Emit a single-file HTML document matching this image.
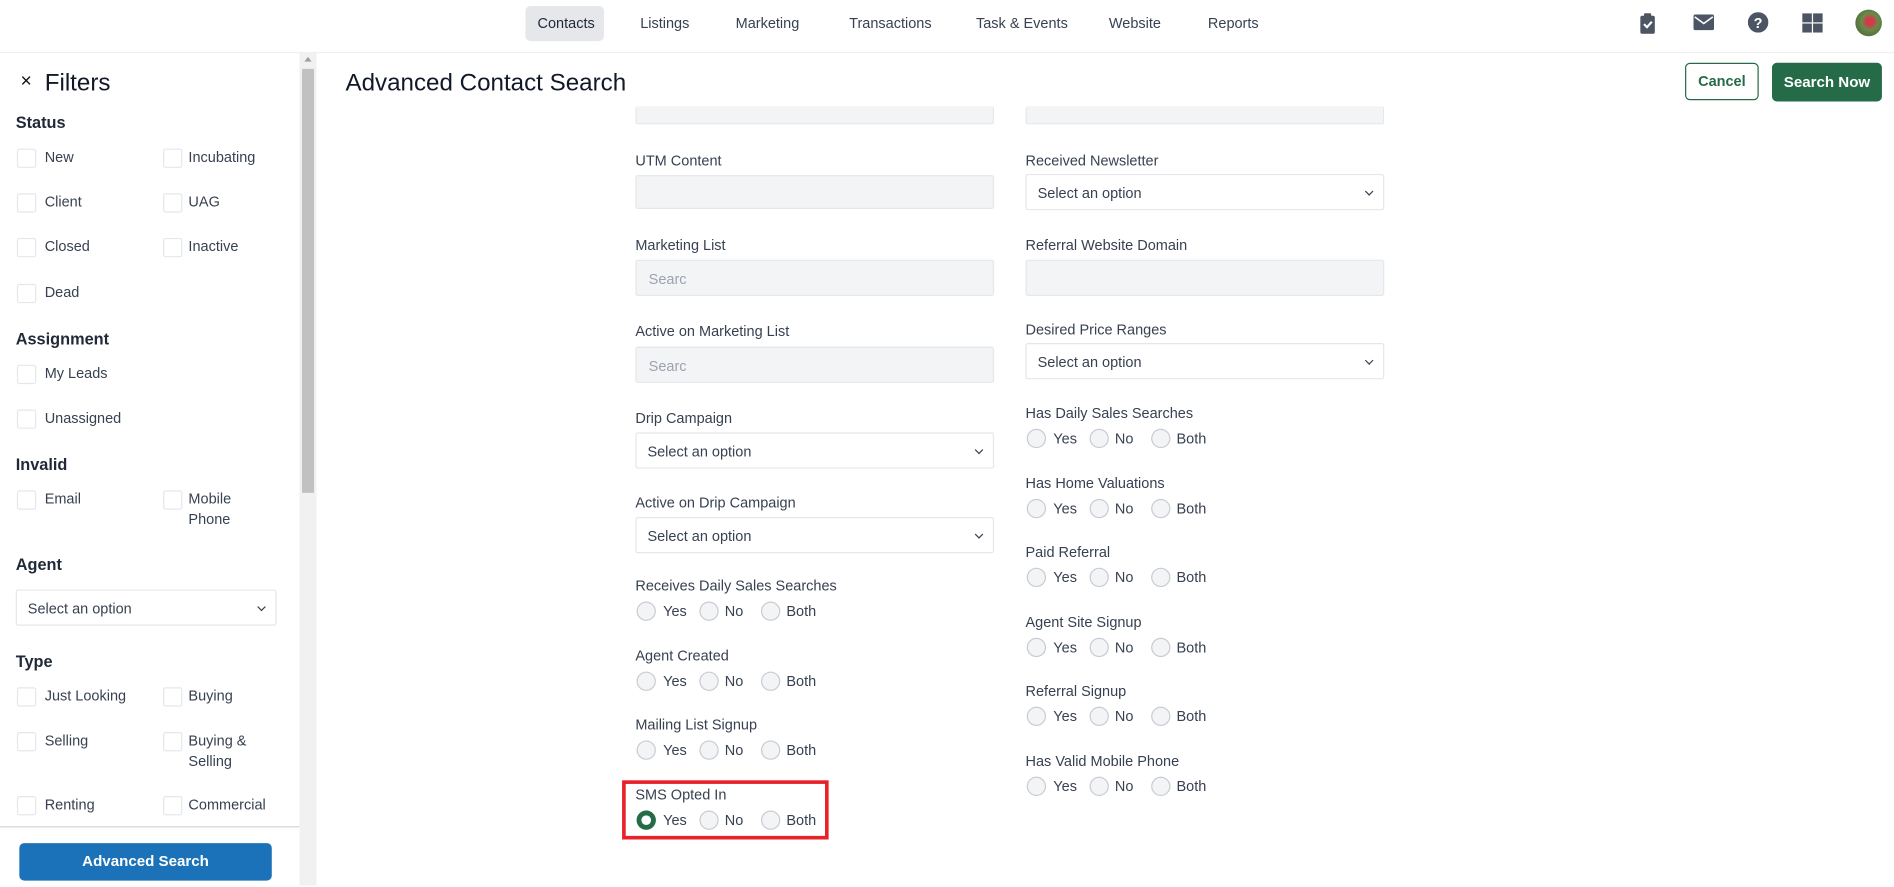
<!DOCTYPE html>
<html><head><meta charset="utf-8"><style>
html,body{margin:0;padding:0;width:1894px;height:885px;overflow:hidden;background:#fff}
#s{position:absolute;left:0;top:0;width:1568px;height:733px;transform:scale(1.20791);transform-origin:0 0;font-family:"Liberation Sans",sans-serif;color:#374151}
.a{position:absolute;white-space:nowrap}
.nav{font-size:12px;color:#374151;top:12px}
.h{font-size:13.5px;font-weight:bold;color:#1f2937}
.cb{position:absolute;width:14px;height:14px;border:1px solid #e5e7eb;border-radius:2px;background:#fff}
.cl{position:absolute;font-size:12px;color:#374151;line-height:17px}
.lab{position:absolute;font-size:12px;color:#374151;font-weight:500}
.inp{position:absolute;width:297px;height:28px;background:#f3f4f6;border:1px solid #e5e7eb;border-radius:2px;box-sizing:border-box}
.sel{position:absolute;width:297px;height:30px;background:#fff;border:1px solid #e5e7eb;border-radius:2px;box-sizing:border-box;font-size:12px;color:#374151;padding:8px 9px}
.sel:after{content:"";position:absolute;right:9px;top:11px;width:4px;height:4px;border-right:1.3px solid #374151;border-bottom:1.3px solid #374151;transform:rotate(45deg)}
.rd{position:absolute;width:16px;height:16px;border:1px solid #c8ccd2;border-radius:50%;background:#f3f4f6;box-sizing:border-box}
.rt{position:absolute;font-size:12px;color:#374151}
</style></head><body><div id="s">
<div class="a" style="left:0;top:0;width:1568px;height:43px;border-bottom:1px solid #f0f0f0"></div>
<div class="a" style="left:435px;top:5px;width:65px;height:29px;background:#e5e7eb;border-radius:4px"></div>
<div class="a nav" style="left:445px;font-weight:500;color:#1f2937">Contacts</div>
<div class="a nav" style="left:530px">Listings</div>
<div class="a nav" style="left:609px">Marketing</div>
<div class="a nav" style="left:703px">Transactions</div>
<div class="a nav" style="left:808px">Task &amp; Events</div>
<div class="a nav" style="left:918px">Website</div>
<div class="a nav" style="left:1000px">Reports</div>
<svg class="a" style="left:1357px;top:10px" width="14" height="18" viewBox="0 0 14 18"><rect x="1" y="3" width="12" height="15" rx="1.5" fill="#4b5563"/><rect x="4" y="1" width="6" height="4" rx="1" fill="#4b5563"/><path d="M4 10l2.5 2.5L10.5 8" stroke="#fff" stroke-width="1.8" fill="none"/></svg>
<svg class="a" style="left:1402px;top:12px" width="17" height="13" viewBox="0 0 17 13"><rect width="17" height="13" rx="1.5" fill="#4b5563"/><path d="M1 2l7.5 5.5L16 2" stroke="#fff" stroke-width="1.3" fill="none"/></svg>
<svg class="a" style="left:1447px;top:10px" width="17" height="17" viewBox="0 0 17 17"><circle cx="8.5" cy="8.5" r="8.5" fill="#4b5563"/><text x="8.5" y="13" font-size="12" font-weight="bold" fill="#fff" text-anchor="middle" font-family="Liberation Sans">?</text></svg>
<svg class="a" style="left:1492px;top:11px" width="17" height="16" viewBox="0 0 17 16"><rect width="8" height="7.5" fill="#4b5563"/><rect x="9" width="8" height="7.5" fill="#4b5563"/><rect y="8.5" width="8" height="7.5" fill="#4b5563"/><rect x="9" y="8.5" width="8" height="7.5" fill="#4b5563"/></svg>
<div class="a" style="left:1536px;top:8px;width:22px;height:22px;border-radius:50%;background:radial-gradient(circle at 55% 45%,#d23a4a 0 18%,#6a8a4a 40%,#3f5a2e 100%)"></div>
<!-- sidebar -->
<div class="a" style="left:17px;top:59px;font-size:16px;color:#111">×</div>
<div class="a" style="left:37px;top:58px;font-size:20px;font-weight:500;color:#111827">Filters</div>
<div class="a h" style="left:13px;top:94px">Status</div>
<div class="cb" style="left:14px;top:123px"></div><div class="cl" style="left:37px;top:122px">New</div>
<div class="cb" style="left:135px;top:123px"></div><div class="cl" style="left:156px;top:122px">Incubating</div>
<div class="cb" style="left:14px;top:160px"></div><div class="cl" style="left:37px;top:159px">Client</div>
<div class="cb" style="left:135px;top:160px"></div><div class="cl" style="left:156px;top:159px">UAG</div>
<div class="cb" style="left:14px;top:197px"></div><div class="cl" style="left:37px;top:196px">Closed</div>
<div class="cb" style="left:135px;top:197px"></div><div class="cl" style="left:156px;top:196px">Inactive</div>
<div class="cb" style="left:14px;top:235px"></div><div class="cl" style="left:37px;top:234px">Dead</div>
<div class="a h" style="left:13px;top:273px">Assignment</div>
<div class="cb" style="left:14px;top:302px"></div><div class="cl" style="left:37px;top:301px">My Leads</div>
<div class="cb" style="left:14px;top:339px"></div><div class="cl" style="left:37px;top:338px">Unassigned</div>
<div class="a h" style="left:13px;top:377px">Invalid</div>
<div class="cb" style="left:14px;top:406px"></div><div class="cl" style="left:37px;top:405px">Email</div>
<div class="cb" style="left:135px;top:406px"></div><div class="cl" style="left:156px;top:405px">Mobile<br>Phone</div>
<div class="a h" style="left:13px;top:460px">Agent</div>
<div class="sel" style="left:13px;top:488px;width:216px">Select an option</div>
<div class="a h" style="left:13px;top:540px">Type</div>
<div class="cb" style="left:14px;top:569px"></div><div class="cl" style="left:37px;top:568px">Just Looking</div>
<div class="cb" style="left:135px;top:569px"></div><div class="cl" style="left:156px;top:568px">Buying</div>
<div class="cb" style="left:14px;top:606px"></div><div class="cl" style="left:37px;top:605px">Selling</div>
<div class="cb" style="left:135px;top:606px"></div><div class="cl" style="left:156px;top:605px">Buying &amp;<br>Selling</div>
<div class="cb" style="left:14px;top:659px"></div><div class="cl" style="left:37px;top:658px">Renting</div>
<div class="cb" style="left:135px;top:659px"></div><div class="cl" style="left:156px;top:658px">Commercial</div>
<div class="a" style="left:0;top:684px;width:248px;height:49px;background:#fff;border-top:1px solid #d1d5db"></div>
<div class="a" style="left:16px;top:698px;width:209px;height:31px;background:#1b72b8;border-radius:4px;color:#fff;font-size:12.5px;font-weight:bold;text-align:center;line-height:31px">Advanced Search</div>
<div class="a" style="left:248px;top:44px;width:14px;height:689px;background:#f1f1f1"></div>
<div class="a" style="left:250px;top:57px;width:10px;height:351px;background:#c1c1c1"></div>
<div class="a" style="left:252px;top:47px;width:0;height:0;border:3px solid transparent;border-bottom:4px solid #a0a0a0;border-top:0"></div>
<!-- main -->
<div class="a" style="left:286px;top:58px;font-size:20px;font-weight:500;color:#111827">Advanced Contact Search</div>
<div class="a" style="left:1395px;top:52px;width:61px;height:31px;border:1px solid #256b48;border-radius:4px;box-sizing:border-box;color:#256b48;font-size:12px;font-weight:bold;text-align:center;line-height:29px">Cancel</div>
<div class="a" style="left:1467px;top:52px;width:91px;height:32px;background:#256b48;border-radius:4px;color:#fff;font-size:12.5px;font-weight:bold;text-align:center;line-height:32px">Search Now</div>
<div class="inp" style="left:526px;top:88px;height:15px;border-top:0"></div>
<div class="inp" style="left:849px;top:88px;height:15px;border-top:0"></div>
<div class="lab" style="left:526px;top:126px">UTM Content</div>
<div class="inp" style="left:526px;top:145px"></div>
<div class="lab" style="left:526px;top:196px">Marketing List</div>
<div class="inp" style="left:526px;top:215px;height:30px;font-size:12px;color:#9ca3af;padding:8px 10px">Searc</div>
<div class="lab" style="left:526px;top:267px">Active on Marketing List</div>
<div class="inp" style="left:526px;top:287px;height:30px;font-size:12px;color:#9ca3af;padding:8px 10px">Searc</div>
<div class="lab" style="left:526px;top:339px">Drip Campaign</div>
<div class="sel" style="left:526px;top:358px">Select an option</div>
<div class="lab" style="left:526px;top:409px">Active on Drip Campaign</div>
<div class="sel" style="left:526px;top:428px">Select an option</div>
<div class="lab" style="left:849px;top:126px">Received Newsletter</div>
<div class="sel" style="left:849px;top:144px">Select an option</div>
<div class="lab" style="left:849px;top:196px">Referral Website Domain</div>
<div class="inp" style="left:849px;top:215px;height:30px"></div>
<div class="lab" style="left:849px;top:266px">Desired Price Ranges</div>
<div class="sel" style="left:849px;top:284px">Select an option</div>
<div class="a" style="left:515px;top:646px;width:171px;height:49px;border:3px solid #e8212b;box-sizing:border-box"></div>
<div id="r"></div>
</div>
<script>
var g=[[526,485,"Receives Daily Sales Searches"],[526,543,"Agent Created"],[526,600,"Mailing List Signup"],[526,658,"SMS Opted In",1],
[849,342,"Has Daily Sales Searches"],[849,400,"Has Home Valuations"],[849,457,"Paid Referral"],[849,515,"Agent Site Signup"],[849,572,"Referral Signup"],[849,630,"Has Valid Mobile Phone"]];
var h="";g.forEach(function(a){var x=a[0],y=a[1];h+='<div class="lab" style="left:'+x+'px;top:'+(y-7)+'px">'+a[2]+'</div>';
var o=[["Yes",1,23],["No",53,74],["Both",104,125]];o.forEach(function(b,i){var sel=a[3]&&i==0;
h+='<div class="rd" style="left:'+(x+b[1])+'px;top:'+(y+13)+'px;'+(sel?'background:#fff;border:4.5px solid #256b48':'')+'"></div><div class="rt" style="left:'+(x+b[2])+'px;top:'+(y+14)+'px">'+b[0]+'</div>';});});
document.getElementById("r").outerHTML=h;
</script>
</body></html>
